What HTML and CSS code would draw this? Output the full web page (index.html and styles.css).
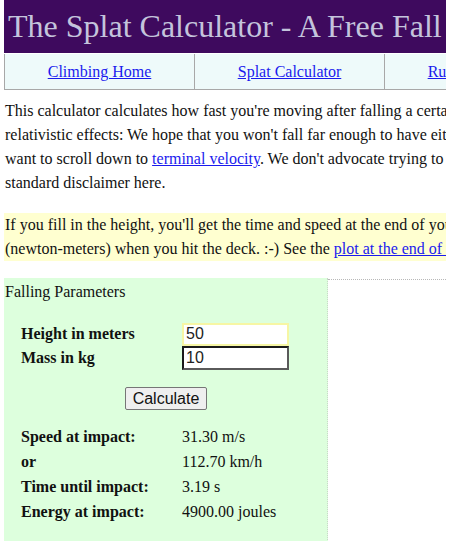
FILE: index.html
```html
<!DOCTYPE html>
<html lang="en">
<head>
  <meta charset="UTF-8" />
  <title>The Splat Calculator - A Free Fall Calculator</title>
  <link rel="stylesheet" href="styles.css">
</head>
<body>
  <div class="page">
    <h1 class="banner">The Splat Calculator - A Free Fall Calculator</h1>

    <div class="nav">
      <div class="nav-cell"><a href="#">Climbing Home</a></div>
      <div class="nav-cell"><a href="#">Splat Calculator</a></div>
      <div class="nav-cell"><a href="#">Rules of Thumb</a></div>
      <div class="nav-cell"><a href="#">Links</a></div>
    </div>

    <p class="intro">
      This calculator calculates how fast you're moving after falling a certain distance. It ignores air resistance and<br>
      relativistic effects: We hope that you won't fall far enough to have either one matter. If you're curious, you may<br>
      want to scroll down to <a href="#terminal">terminal velocity</a>. We don't advocate trying to prove any of this. Insert<br>
      standard disclaimer here.
    </p>

    <p class="note">
      If you fill in the height, you'll get the time and speed at the end of your fall. Add a mass and you'll get the energy<br>
      (newton-meters) when you hit the deck. :-) See the <a href="#plot">plot at the end of the page</a> for speeds versus heights.
    </p>

    <div class="calc">
      <form class="params" id="splatForm">
        <div class="params-title">Falling Parameters</div>

        <div class="field-grid">
          <label for="height">Height in meters</label>
          <input type="text" id="height" class="focused" value="50">
          <label for="mass">Mass in kg</label>
          <input type="text" id="mass" value="10">
        </div>

        <div class="button-row">
          <button type="submit">Calculate</button>
        </div>

        <div class="result-grid">
          <span class="result-label">Speed at impact:</span>
          <span id="speedMs">31.30 m/s</span>
          <span class="result-label">or</span>
          <span id="speedKmh">112.70 km/h</span>
          <span class="result-label">Time until impact:</span>
          <span id="fallTime">3.19 s</span>
          <span class="result-label">Energy at impact:</span>
          <span id="energy">4900.00 joules</span>
        </div>
      </form>
      <div class="side"></div>
    </div>
  </div>

  <script>
    document.getElementById('splatForm').addEventListener('submit', function(e) {
      e.preventDefault();

      const g = 9.8;
      const h = parseFloat(document.getElementById('height').value) || 0;
      const m = parseFloat(document.getElementById('mass').value) || 0;

      // v = sqrt(2gh), t = sqrt(2h/g), E = mgh
      const v = Math.sqrt(2 * g * h);
      const t = Math.sqrt(2 * h / g);
      const energy = m * g * h;

      document.getElementById('speedMs').textContent  = v.toFixed(2) + ' m/s';
      document.getElementById('speedKmh').textContent = (v * 3.6).toFixed(2) + ' km/h';
      document.getElementById('fallTime').textContent = t.toFixed(2) + ' s';
      document.getElementById('energy').textContent   = energy.toFixed(2) + ' joules';
    });
  </script>
</body>
</html>
```

FILE: styles.css
```css
/* page & text */
html {
  overflow: hidden;
}
body {
  margin: 0 4px;
  background: #fff;
  color: #111;
  font-family: "Liberation Serif", "Times New Roman", serif;
  font-size: 16px;
}
.page {
  width: 1000px;
}
a {
  color: #1a1aee;
}

/* purple title bar */
.banner {
  margin: 0;
  height: 53px;
  padding-left: 4px;
  background: #3e0a5e;
  color: #c4c4dc;
  font-weight: normal;
  font-size: 32px;
  line-height: 52px;
  white-space: nowrap;
}

/* link bar */
.nav {
  display: flex;
  margin-top: 1px;
  background: #eefafa;
  border-bottom: 1px solid #a8a8a8;
  border-left: 1px solid #a8a8a8;
}
.nav-cell {
  width: 189px;
  height: 35px;
  border-right: 1px solid #a8a8a8;
  text-align: center;
  line-height: 36px;
}

/* intro text */
.intro,
.note {
  margin: 0;
  line-height: 24px;
  white-space: nowrap;
  padding-left: 1px;
}
.intro {
  margin-top: 9px;
}
.note {
  margin-top: 18px;
  background: #ffffd0;
}

/* calculator table */
.calc {
  display: flex;
  margin-top: 17px;
}
.params {
  width: 322px;
  height: 300px;
  margin: 0;
  padding: 2px 0 0 1px;
  background: #ddffdd;
  border-right: 1px dotted #c8d8c8;
}
.side {
  flex: 1;
  margin-top: 1px;
  border-top: 1px dotted #b8b8b8;
}
.params-title {
  line-height: 24px;
}

.field-grid,
.result-grid {
  display: grid;
  grid-template-columns: 161px 120px;
  padding-left: 16px;
}
.field-grid {
  margin-top: 18px;
  grid-auto-rows: 24px;
  align-items: center;
}
.field-grid label,
.result-label {
  font-weight: bold;
}
input {
  box-sizing: border-box;
  width: 107px;
  height: 24px;
  margin: 0;
  padding: 0 2px;
  font-family: "Liberation Sans", Arial, sans-serif;
  font-size: 16px;
  color: #222;
  background: #fff;
  border: 2px solid;
  border-color: #1a1a1a #5a5a5a #5a5a5a #1a1a1a;
}
input.focused {
  height: 23px;
  border-color: #f6f6a4;
}

/* button */
.button-row {
  margin-top: 17px;
  text-align: center;
}
button {
  height: 23px;
  padding: 0 7px;
  font-family: "Liberation Sans", Arial, sans-serif;
  font-size: 16px;
  color: #111;
  background: #efefef;
  border: 1px solid #767676;
  border-radius: 2px;
  cursor: pointer;
}

/* results */
.result-grid {
  margin-top: 14px;
  grid-auto-rows: 25px;
  line-height: 25px;
}
```
